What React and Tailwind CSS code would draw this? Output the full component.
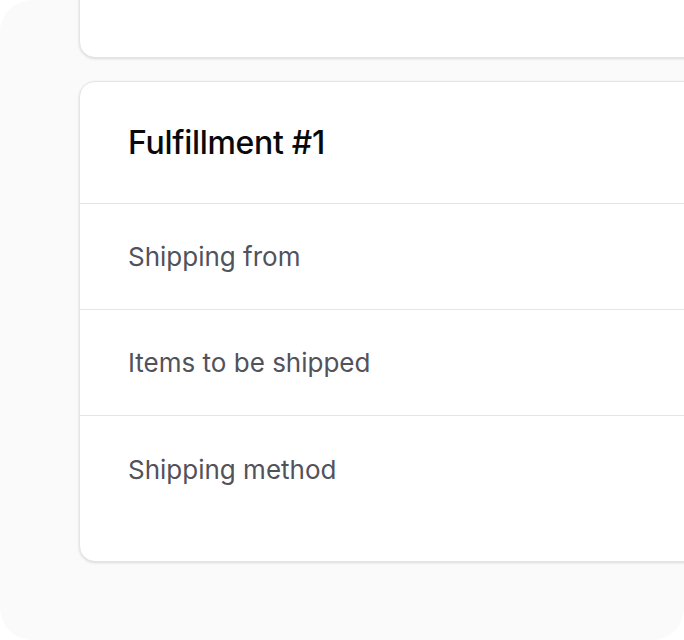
import React from 'react';

const rows = ['Shipping from', 'Items to be shipped', 'Shipping method'];

const App = () => {
  return (
    <div className="w-[684px] h-[640px] bg-white" style={{ fontFamily: 'Inter, "Noto Sans", sans-serif' }}>
      <div className="w-full h-full bg-[#fafafa] rounded-[32px] overflow-hidden pl-[79px] flex flex-col gap-[23px]">
        {/* previous card, scrolled mostly out of view */}
        <div className="w-[680px] h-[120px] -mt-[62px] shrink-0 bg-white border border-[#e4e4e7] rounded-2xl shadow-sm" />

        <div className="w-[680px] shrink-0 bg-white border border-[#e4e4e7] rounded-2xl shadow-sm flex flex-col">
          <div className="h-[122px] px-[48px] flex items-center border-b border-[#e4e4e7]">
            <h2 className="text-[32px] font-medium text-[#09090b] tracking-[-0.3px]">Fulfillment #1</h2>
          </div>
          {rows.map((label, i) => (
            <div
              key={label}
              className={`px-[48px] text-[26px] text-[#52525b] flex ${
                i < rows.length - 1 ? 'h-[106px] items-center border-b border-[#e4e4e7]' : 'h-[145px] pt-[34px]'
              }`}
            >
              {label}
            </div>
          ))}
        </div>
      </div>
    </div>
  );
};

export default App;
